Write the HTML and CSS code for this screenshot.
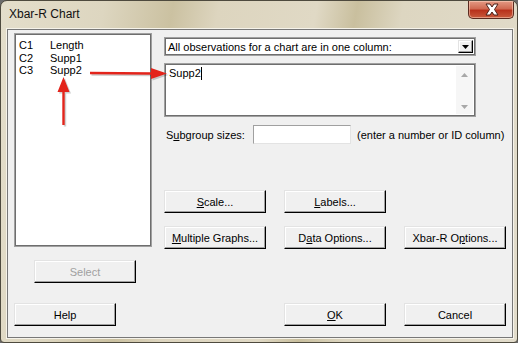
FILE: index.html
```html
<!DOCTYPE html>
<html>

<head>
    <meta charset="utf-8">
    <title>Xbar-R Chart</title>
    <link rel="stylesheet" href="styles.css">
</head>

<body>
    <div class="window">
        <div class="titlebar">
            <span class="title">Xbar-R Chart</span>
            <div class="close">
                <svg width="46" height="19" viewBox="0 0 46 19">
                    <path d="M17 4 L21 4 L23 7 L25 4 L29 4 L25.5 9.5 L29 15 L25 15 L23 12 L21 15 L17 15 L20.5 9.5 Z" fill="#fff" stroke="#4a2018" stroke-width="1" stroke-linejoin="round"/>
                </svg>
            </div>
        </div>
        <div class="client">
            <div class="top">
                <div class="leftcol">
                    <div class="varlist">
                        <div class="varrow"><span class="col">C1</span><span>Length</span></div>
                        <div class="varrow"><span class="col">C2</span><span>Supp1</span></div>
                        <div class="varrow"><span class="col">C3</span><span>Supp2</span></div>
                    </div>
                    <div class="btn disabled selectbtn">Select</div>
                </div>
                <div class="rightcol">
                    <div class="dropdown">
                        <span class="ddtext">All observations for a chart are in one column:</span>
                        <div class="ddarrow">
                            <svg width="7" height="4" viewBox="0 0 7 4"><path d="M0 0 L7 0 L3.5 4 Z" fill="#000"/></svg>
                        </div>
                    </div>
                    <div class="textbox">
                        <div class="tbtext">Supp2<span class="caret"></span></div>
                        <div class="vscroll">
                            <svg width="7" height="4" viewBox="0 0 7 4"><path d="M0 4 L7 4 L3.5 0 Z" fill="#a8a8a8"/></svg>
                            <svg width="7" height="4" viewBox="0 0 7 4"><path d="M0 0 L7 0 L3.5 4 Z" fill="#a8a8a8"/></svg>
                        </div>
                    </div>
                    <div class="subrow">
                        <span class="sublabel">S<u>u</u>bgroup sizes:</span>
                        <div class="subinput"></div>
                        <span class="hint">(enter a number or ID column)</span>
                    </div>
                    <div class="btngrid">
                        <div class="btn"><u>S</u>cale...</div>
                        <div class="btn"><u>L</u>abels...</div>
                        <div></div>
                        <div class="btn"><u>M</u>ultiple Graphs...</div>
                        <div class="btn">D<u>a</u>ta Options...</div>
                        <div class="btn">Xbar-R O<u>p</u>tions...</div>
                    </div>
                </div>
            </div>
            <div class="bottom">
                <div class="btn">Help</div>
                <div class="spacer"></div>
                <div class="btn"><u>O</u>K</div>
                <div class="btn">Cancel</div>
            </div>
        </div>
        <svg class="arrows" width="518" height="343" viewBox="0 0 518 343">
            <g fill="#000" opacity="0.18" transform="translate(1.5,1.5)">
                <path d="M62.3 125 L62.3 92 L57.5 92 L63.5 77 L69.5 92 L64.7 92 L64.7 125 Z"/>
                <path d="M90 71.8 L151 72.3 L151 68 L167 73.5 L151 79 L151 74.7 L90 74.2 Z"/>
            </g>
            <g fill="#e3241b">
                <path d="M62.3 125 L62.3 92 L57.5 92 L63.5 77 L69.5 92 L64.7 92 L64.7 125 Z"/>
                <path d="M90 71.8 L151 72.3 L151 68 L167 73.5 L151 79 L151 74.7 L90 74.2 Z"/>
            </g>
        </svg>
    </div>
</body>

</html>
```

FILE: styles.css
```css
body {
    margin: 0;
    background: #6b6b6b;
    font-family: "Liberation Sans", Arial, sans-serif;
    font-size: 11px;
    color: #000;
}

.window {
    position: relative;
    width: 518px;
    height: 343px;
    box-sizing: border-box;
    border: 1px solid #4e4a3e;
    border-radius: 7px 7px 4px 4px;
    background: linear-gradient(100deg, #e4decb 0%, #ddd6c0 18%, #cbc1a1 30%, #ddd5bf 38%, #e0d9c5 55%, #c9bf9e 62%, #ddd6c1 70%, #e2dccb 100%);
    overflow: hidden;
}

.titlebar {
    height: 28px;
    display: flex;
    align-items: flex-start;
    justify-content: space-between;
}

.title {
    margin: 6px 0 0 8px;
    font-size: 12px;
    color: #111;
}

.close {
    width: 46px;
    height: 18px;
    margin-right: 3px;
    box-sizing: border-box;
    border: 1px solid #5a2a1f;
    border-top: none;
    border-radius: 0 0 5px 5px;
    background: linear-gradient(#e49a84 0%, #d06a52 45%, #b8321c 55%, #c85a3c 100%);
    box-shadow: inset 0 0 0 1px rgba(255, 220, 200, 0.5);
}

.close svg {
    display: block;
    margin-top: -1px;
}

.client {
    margin-left: 6px;
    width: 506px;
    height: 309px;
    box-sizing: border-box;
    border: 1px solid #787878;
    box-shadow: 0 0 0 1px #f6f3ea;
    background: #f0f0f0;
    padding: 3px 6px 0 6px;
}

.top {
    display: flex;
    gap: 12px;
}

.leftcol {
    width: 138px;
}

.varlist {
    height: 214px;
    box-sizing: border-box;
    border: 1px solid #a0a0a0;
    box-shadow: inset 0 0 0 1px #6e6e6e;
    background: #fff;
    padding: 5px 0 0 4px;
}

.varrow {
    display: flex;
    height: 12.5px;
    line-height: 12.5px;
}

.varrow .col {
    width: 31px;
}

.btn {
    width: 102px;
    height: 23px;
    box-sizing: border-box;
    border: 1px solid;
    border-color: #e3e3e3 #000 #000 #e3e3e3;
    box-shadow: inset -1px -1px #a0a0a0, inset 1px 1px #fff;
    background: #f0f0f0;
    display: flex;
    align-items: center;
    justify-content: center;
    white-space: nowrap;
}

.btn.disabled {
    color: #a0a0a0;
}

.selectbtn {
    margin: 13px 0 0 20px;
}

.rightcol {
    width: 342px;
    padding-top: 4px;
}

.dropdown {
    width: 312px;
    height: 19px;
    box-sizing: border-box;
    border: 1px solid #a0a0a0;
    box-shadow: inset 0 0 0 1px #6e6e6e;
    background: #fff;
    display: flex;
    align-items: center;
    padding: 0 2px 0 3px;
}

.ddtext {
    flex: 1;
}

.ddarrow {
    width: 15px;
    height: 13px;
    box-sizing: border-box;
    border: 1px solid;
    border-color: #e3e3e3 #000 #000 #e3e3e3;
    box-shadow: inset -1px -1px #a0a0a0, inset 1px 1px #fff;
    background: #f0f0f0;
    display: flex;
    align-items: center;
    justify-content: center;
}

.ddarrow svg {
    display: block;
}

.textbox {
    margin-top: 7px;
    width: 312px;
    height: 54px;
    box-sizing: border-box;
    border: 1px solid #a0a0a0;
    box-shadow: inset 0 0 0 1px #6e6e6e;
    background: #fff;
    display: flex;
    padding: 2px;
}

.tbtext {
    flex: 1;
    padding: 1px 0 0 2px;
    line-height: 13px;
}

.caret {
    display: inline-block;
    width: 1px;
    height: 13px;
    background: #000;
    vertical-align: top;
}

.vscroll {
    width: 17px;
    background: #f6f6f6;
    display: flex;
    flex-direction: column;
    justify-content: space-between;
    align-items: center;
    padding: 7px 0 5px 0;
    box-sizing: border-box;
}

.vscroll svg {
    display: block;
}

.subrow {
    margin-top: 8px;
    height: 19px;
    display: flex;
    align-items: center;
}

.sublabel {
    width: 87px;
    padding-left: 2px;
}

.subinput {
    width: 98px;
    height: 19px;
    box-sizing: border-box;
    border: 1px solid;
    border-color: #a0a0a0 #e3e3e3 #e3e3e3 #a0a0a0;
    background: #fff;
}

.hint {
    margin-left: 6px;
}

.btngrid {
    margin-top: 46px;
    display: grid;
    grid-template-columns: 102px 102px 102px;
    column-gap: 18px;
    row-gap: 13px;
}

.bottom {
    margin-top: 20px;
    display: flex;
}

.bottom .spacer {
    width: 168px;
}

.bottom .btn + .btn {
    margin-left: 18px;
}

.arrows {
    position: absolute;
    left: -1px;
    top: -1px;
    pointer-events: none;
}
```
